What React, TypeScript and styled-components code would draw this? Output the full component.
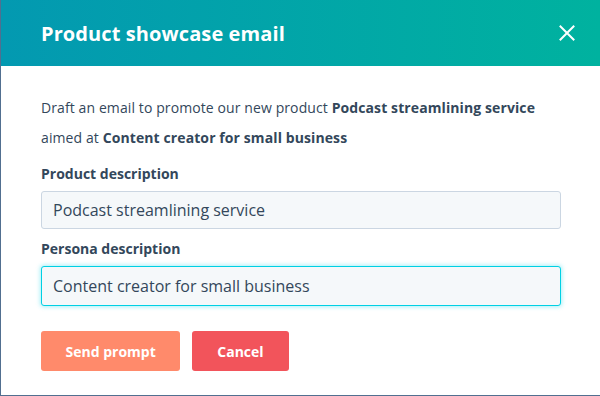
import React from "react";
import styled, { createGlobalStyle } from "styled-components";

const GlobalStyle = createGlobalStyle`
  html, body { margin: 0; padding: 0; background: #ffffff; }
  body { font-family: "Open Sans", "Noto Sans", sans-serif; color: #33475b; }
  * { box-sizing: border-box; }
`;

const Dialog = styled.div`
  width: 600px;
  height: 396px;
  background: #ffffff;
  border-left: 1px solid #516f90;
  border-bottom: 1px solid #516f90;
  display: flex;
  flex-direction: column;
`;

const Header = styled.header`
  height: 66px;
  flex: none;
  display: flex;
  align-items: center;
  justify-content: space-between;
  padding: 0 22px 0 40px;
  background: linear-gradient(90deg, #0399b1 0%, #00b29f 100%);
`;

const Title = styled.h1`
  margin: 0;
  font-size: 20px;
  font-weight: 700;
  color: #ffffff;
  letter-spacing: 0.1px;
`;

const CloseButton = styled.button`
  width: 22px;
  height: 22px;
  padding: 0;
  border: none;
  background: transparent;
  display: flex;
  align-items: center;
  justify-content: center;
  cursor: pointer;
`;

const Body = styled.div`
  padding: 27px 39px 0 40px;
  display: flex;
  flex-direction: column;
`;

const Intro = styled.p`
  margin: 0 0 11px;
  font-size: 14px;
  line-height: 30px;
  letter-spacing: 0.1px;
  color: #33475b;
`;

const Strong = styled.strong`
  font-weight: 700;
`;

const Field = styled.div<{ $gap: number }>`
  display: flex;
  flex-direction: column;
  margin-bottom: ${(p) => p.$gap}px;
`;

const Label = styled.label`
  font-size: 14px;
  line-height: 20px;
  font-weight: 700;
  margin-bottom: 7px;
`;

const Input = styled.input<{ $focused?: boolean }>`
  height: ${(p) => (p.$focused ? 40 : 38)}px;
  width: 520px;
  padding: 0 11px;
  font-family: inherit;
  font-size: 16px;
  color: #33475b;
  background: #f5f8fa;
  border: 1px solid ${(p) => (p.$focused ? "#00d0e4" : "#cbd6e2")};
  border-radius: 3px;
  outline: none;
  box-shadow: ${(p) => (p.$focused ? "0 0 4px 1px rgba(0, 208, 228, 0.35)" : "none")};
`;

const Actions = styled.div`
  display: flex;
  gap: 12px;
  margin-top: 15px;
`;

const Button = styled.button<{ $variant: "primary" | "danger" }>`
  height: 40px;
  padding: 0 ${(p) => (p.$variant === "primary" ? 24.5 : 25)}px;
  border: none;
  border-radius: 3px;
  font-family: inherit;
  font-size: 14px;
  font-weight: 700;
  color: #ffffff;
  background: ${(p) => (p.$variant === "primary" ? "#ff8a6b" : "#f2545b")};
  cursor: pointer;
`;

export default function App() {
  return (
    <>
      <GlobalStyle />
      <Dialog>
        <Header>
          <Title>Product showcase email</Title>
          <CloseButton aria-label="Close">
            <svg width="16" height="16" viewBox="0 0 16 16">
              <path d="M1.5 1.5 L14.5 14.5 M14.5 1.5 L1.5 14.5" stroke="#ffffff" strokeWidth="2" strokeLinecap="square" />
            </svg>
          </CloseButton>
        </Header>
        <Body>
          <Intro>
            Draft an email to promote our new product <Strong>Podcast streamlining service</Strong>
            <br />
            aimed at <Strong>Content creator for small business</Strong>
          </Intro>
          <Field $gap={10}>
            <Label>Product description</Label>
            <Input defaultValue="Podcast streamlining service" />
          </Field>
          <Field $gap={10}>
            <Label>Persona description</Label>
            <Input $focused defaultValue="Content creator for small business" />
          </Field>
          <Actions>
            <Button $variant="primary">Send prompt</Button>
            <Button $variant="danger">Cancel</Button>
          </Actions>
        </Body>
      </Dialog>
    </>
  );
}
